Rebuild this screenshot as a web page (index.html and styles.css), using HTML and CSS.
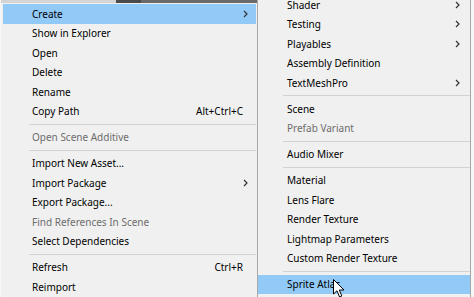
FILE: index.html
```html
<!DOCTYPE html>
<html lang="en">
  <head>
    <meta charset="UTF-8" />
    <meta name="viewport" content="width=device-width, initial-scale=1.0" />
    <title>Project context menu</title>
    <link rel="stylesheet" href="styles.css">
  </head>
  <body>
    <div class="screen">
      <div class="left-col">
        <div class="app-strip">
          <div class="strip-a"></div>
          <div class="strip-b"></div>
          <div class="strip-c"></div>
        </div>
        <ul class="menu main">
          <li class="item active"><span class="label">Create</span><span class="arrow"><svg width="5" height="8" viewBox="0 0 5 8"><path d="M1 1 L4 4 L1 7" fill="none" stroke="#333" stroke-width="1.2"/></svg></span></li>
          <li class="item"><span class="label">Show in Explorer</span></li>
          <li class="item"><span class="label">Open</span></li>
          <li class="item"><span class="label">Delete</span></li>
          <li class="item"><span class="label">Rename</span></li>
          <li class="item"><span class="label">Copy Path</span><span class="key">Alt+Ctrl+C</span></li>
          <li class="sep"></li>
          <li class="item disabled"><span class="label">Open Scene Additive</span></li>
          <li class="sep"></li>
          <li class="item"><span class="label">Import New Asset...</span></li>
          <li class="item"><span class="label">Import Package</span><span class="arrow"><svg width="5" height="8" viewBox="0 0 5 8"><path d="M1 1 L4 4 L1 7" fill="none" stroke="#333" stroke-width="1.2"/></svg></span></li>
          <li class="item"><span class="label">Export Package...</span></li>
          <li class="item disabled"><span class="label">Find References In Scene</span></li>
          <li class="item"><span class="label">Select Dependencies</span></li>
          <li class="sep"></li>
          <li class="item"><span class="label">Refresh</span><span class="key">Ctrl+R</span></li>
          <li class="item"><span class="label">Reimport</span></li>
        </ul>
      </div>
      <ul class="menu sub">
        <li class="item"><span class="label">Shader</span><span class="arrow"><svg width="5" height="8" viewBox="0 0 5 8"><path d="M1 1 L4 4 L1 7" fill="none" stroke="#333" stroke-width="1.2"/></svg></span></li>
        <li class="item"><span class="label">Testing</span><span class="arrow"><svg width="5" height="8" viewBox="0 0 5 8"><path d="M1 1 L4 4 L1 7" fill="none" stroke="#333" stroke-width="1.2"/></svg></span></li>
        <li class="item"><span class="label">Playables</span><span class="arrow"><svg width="5" height="8" viewBox="0 0 5 8"><path d="M1 1 L4 4 L1 7" fill="none" stroke="#333" stroke-width="1.2"/></svg></span></li>
        <li class="item"><span class="label">Assembly Definition</span></li>
        <li class="item"><span class="label">TextMeshPro</span><span class="arrow"><svg width="5" height="8" viewBox="0 0 5 8"><path d="M1 1 L4 4 L1 7" fill="none" stroke="#333" stroke-width="1.2"/></svg></span></li>
        <li class="sep"></li>
        <li class="item"><span class="label">Scene</span></li>
        <li class="item disabled"><span class="label">Prefab Variant</span></li>
        <li class="sep"></li>
        <li class="item"><span class="label">Audio Mixer</span></li>
        <li class="sep"></li>
        <li class="item"><span class="label">Material</span></li>
        <li class="item"><span class="label">Lens Flare</span></li>
        <li class="item"><span class="label">Render Texture</span></li>
        <li class="item"><span class="label">Lightmap Parameters</span></li>
        <li class="item"><span class="label">Custom Render Texture</span></li>
        <li class="sep"></li>
        <li class="item active"><span class="label">Sprite Atlas</span></li>
      </ul>
      <div class="outside"></div>
      <svg class="cursor" width="12" height="19" viewBox="0 0 12 19">
        <path d="M0.5 0.5 L0.5 15 L4 11.8 L6.6 18 L8.8 17 L6.3 11 L11 11 Z" fill="#fff" stroke="#000" stroke-width="1" stroke-linejoin="round"/>
      </svg>
    </div>
  </body>
</html>
```

FILE: styles.css
```css
body {
  margin: 0;
  background-color: #f4f4f4;
  overflow: hidden;
}
.screen {
  position: relative;
  width: 474px;
  height: 297px;
  display: flex;
  overflow: hidden;
  font-family: "Noto Sans", "Open Sans", sans-serif;
  font-size: 10px;
  color: #000;
}
.left-col {
  width: 256px;
  display: flex;
  flex-direction: column;
  background-color: #f0f0f0;
  border-left: 1px solid #f8f8f8;
  border-right: 1px solid #a8a8a8;
}
.app-strip {
  height: 3px;
  display: flex;
}
.strip-a {
  width: 115px;
  background-color: #d4d4d4;
}
.strip-b {
  width: 25px;
  background-color: #4a4a4a;
}
.strip-c {
  flex: 1;
  background-color: #6a6a6a;
}
.menu {
  list-style: none;
  margin: 0;
  padding: 0;
}
.main {
  padding: 1px 1px 0 2px;
}
.sub {
  width: 212px;
  margin-top: -5px;
  background-color: #f0f0f0;
  border-right: 1px solid #a8a8a8;
}
.item {
  height: 19.5px;
  display: flex;
  align-items: center;
  padding-left: 29px;
  padding-right: 12px;
  white-space: nowrap;
}
.item.active {
  background-color: #91c9f7;
}
.item.disabled {
  color: #6d6d6d;
}
.label {
  flex: 1;
}
.key {
  padding-right: 1px;
}
.arrow {
  display: flex;
  align-items: center;
  margin-right: -4px;
}
.sub .arrow {
  margin-right: -2px;
}
.sep {
  height: 6.5px;
  display: flex;
  align-items: center;
  margin-left: 26px;
}
.sep::after {
  content: "";
  flex: 1;
  height: 1px;
  background-color: #d2d2d2;
}
.sub .sep {
  margin-left: 25px;
}
.outside {
  flex: 1;
  background-color: #f6f6f6;
}
.cursor {
  position: absolute;
  left: 333px;
  top: 279px;
}
```
